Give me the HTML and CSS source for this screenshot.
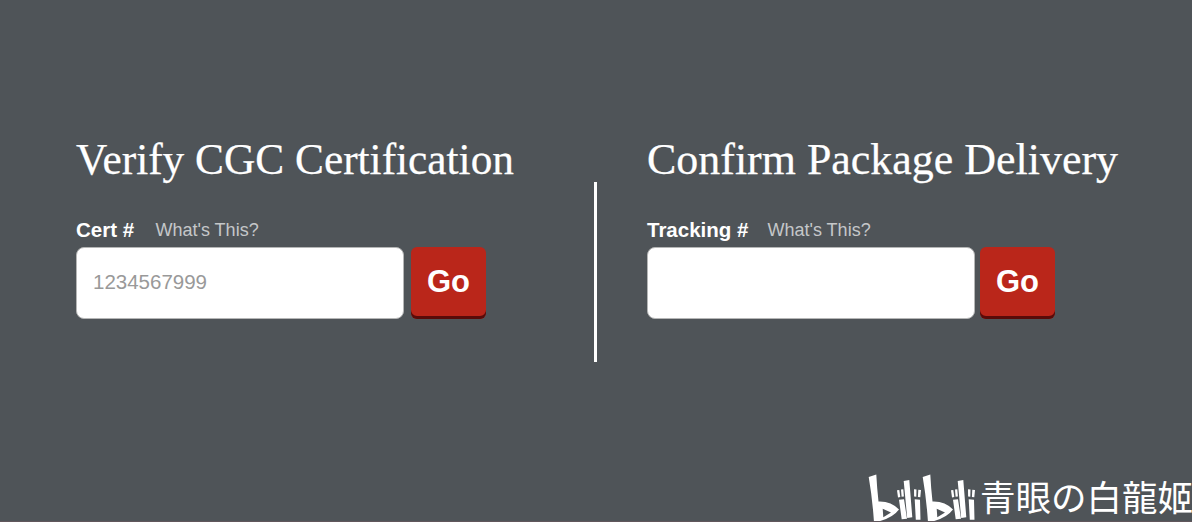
FILE: index.html
```
<!DOCTYPE html>
<html lang="en">
<head>
<meta charset="utf-8">
<title>Verify CGC Certification</title>
<link rel="stylesheet" href="styles.css">
</head>
<body>
<main class="lookup">
  <section class="panel">
    <h1 class="heading"><svg class="title" width="460" height="56"><text x="0" y="38" textLength="438" lengthAdjust="spacingAndGlyphs">Verify CGC Certification</text></svg></h1>
    <div class="labels"><label class="label label-cert" for="cert">Cert #</label><a class="help">What's This?</a></div>
    <div class="row row-cert"><input class="field" id="cert" placeholder="1234567999"><button class="go">Go</button></div>
  </section>
  <div class="divider"></div>
  <section class="panel">
    <h1 class="heading"><svg class="title" width="480" height="56"><text x="0" y="38" textLength="471" lengthAdjust="spacingAndGlyphs">Confirm Package Delivery</text></svg></h1>
    <div class="labels"><label class="label label-tracking" for="tracking">Tracking #</label><a class="help">What's This?</a></div>
    <div class="row row-tracking"><input class="field" id="tracking"><button class="go">Go</button></div>
  </section>
</main>
<div class="watermark">
  <svg class="logo" viewBox="0 0 108 48" width="108" height="48" role="img" aria-label="bilibili">
    <g id="bili">
      <path fill-rule="evenodd" d="M-.3 3 7.300 .5Q8 14 9.500 27.500Q22 27 30 35.500Q23 45 5 48.500Q3.500 25-.3 3ZM13.700 34.700 14.300 43.300 22 38.500Z"/>
      <path d="M28 16.300 30.300 15.900 31.300 23 29 23.400ZM32 15.600 34.300 15.200 34.900 22.500 32.600 22.800ZM30 25.700 35 25.200 38 44.700 32.700 45.300ZM34.700 7 40.300 6 43.300 43.300 38.200 44ZM45 15.300 47.500 15.400 47.300 22.700 45.100 22.500ZM49.300 15.700 52 15.900 51.300 23.200 48.900 22.900ZM45.700 25.300 51 25.700 51.500 45.700 46.800 45.700Z"/>
    </g>
    <use href="#bili" x="54"/>
  </svg>
  <span class="author" lang="ja">青眼の白龍姬</span>
</div>
</body>
</html>
```

FILE: styles.css
```
* { box-sizing: border-box; }
body {
  margin: 0;
  width: 1192px;
  height: 522px;
  overflow: hidden;
  position: relative;
  background: #4f5458;
  border-bottom: 1px solid #61575c;
  color: #fff;
  font-family: "Liberation Sans", Arial, sans-serif;
}
.lookup {
  display: grid;
  grid-template-columns: 518px 3px 545px;
  column-gap: 0;
  padding: 136px 0 0 76px;
}
.panel + .divider + .panel { padding-left: 50px; }
.heading { margin: 0; height: 56px; font-weight: normal; }
.title { display: block; overflow: visible; }
.title text {
  fill: #fff;
  stroke: #fff;
  stroke-width: .25px;
  font: 43.500px Georgia, "Liberation Serif", serif;
}
.labels { display: flex; align-items: center; height: 24px; margin-top: 26px; }
.label { font-size: 20.500px; font-weight: bold; line-height: 24px; white-space: nowrap; }
.label-cert { width: 79.500px; }
.label-tracking { width: 120.500px; }
.help { color: #c5c7c9; font-size: 18px; line-height: 24px; }
.row { display: flex; margin-top: 5px; }
.row-cert { gap: 7px; }
.row-tracking { gap: 5px; }
.field {
  width: 328px;
  height: 72px;
  padding: 0 16px 2px;
  border: 1px solid #b5b6b6;
  border-radius: 8px;
  background: #fff;
  font: 20.500px "Liberation Sans", Arial, sans-serif;
}
.field::placeholder { color: #999; opacity: 1; }
.go {
  width: 75px;
  height: 72px;
  padding: 0 0 2px;
  border: 0;
  border-radius: 6px;
  background: #ba261a;
  box-shadow: inset 0 -3px 0 #590b09;
  color: #fff;
  font: bold 31px "Liberation Sans", Arial, sans-serif;
}
.divider { height: 180px; margin-top: 46px; background: #fff; }
.watermark {
  position: absolute;
  left: 869px;
  top: 474px;
  display: flex;
  align-items: flex-start;
  gap: 3px;
}
.logo { flex: none; fill: #fff; overflow: visible; }
.author {
  font: 35.500px/44px "Noto Sans CJK JP", sans-serif;
  white-space: nowrap;
}
```
